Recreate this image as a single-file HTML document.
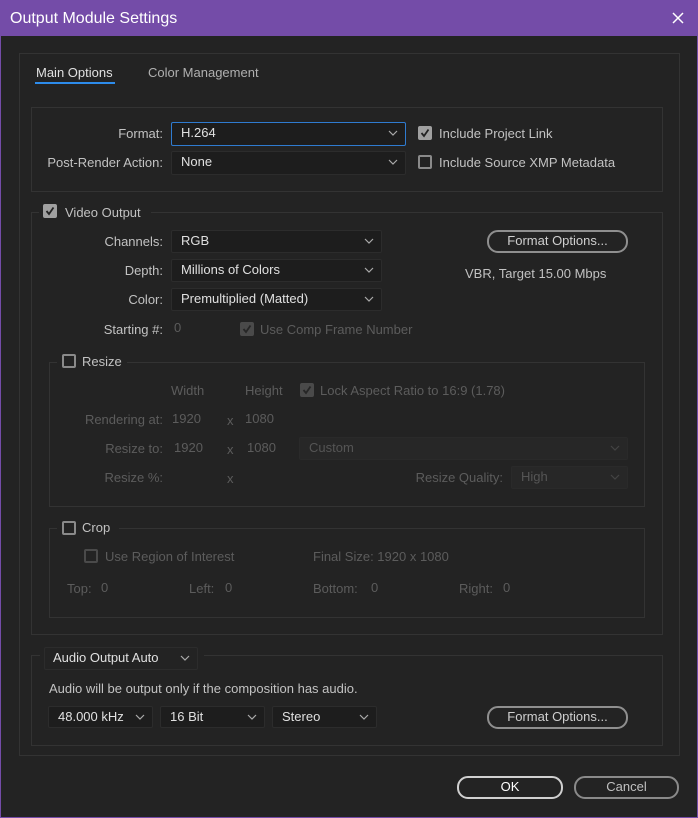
<!DOCTYPE html>
<html><head><meta charset="utf-8"><style>
*{box-sizing:border-box;margin:0;padding:0}
body{width:698px;height:818px;background:#232323;font-family:"Liberation Sans",sans-serif;font-size:13px;color:#c2c2c2;position:relative;overflow:hidden;letter-spacing:0}
.a{position:absolute;white-space:nowrap;line-height:15px}
.r{text-align:right}
.box{position:absolute;border:1px solid #333}
.dd{position:absolute;background:#1d1d1d;border:1px solid #2c2c2c;color:#e0e0e0;padding-left:9px;line-height:20px;border-radius:2px;white-space:nowrap}
.dd svg{position:absolute;right:7px;top:7px}
.dis{color:#5c5c5c}
.dd.dis{background:#272727;border-color:#2a2a2a;color:#555}
.cb{position:absolute;width:14px;height:14px;border:2px solid #8a8a8a;border-radius:2px}
.cb.on{background:#a0a0a0;border-color:#a0a0a0}
.cb.off.dis{border-color:#4a4a4a}
.cb.on.dis{background:#4a4a4a;border-color:#4a4a4a}
.btn{position:absolute;border:2px solid #8f8f8f;border-radius:11px;text-align:center;color:#cfcfcf;line-height:18px}
.lg{background:#232323;padding:0 4px}
</style></head><body>
<div style="position:absolute;left:0;top:0;width:698px;height:818px;border:1px solid #744ca8"></div>
<div style="position:absolute;left:0;top:0;width:698px;height:36px;background:#744ca8"></div>
<div class="a" style="left:10px;top:10px;font-size:16px;line-height:18px;color:#fff">Output Module Settings</div>
<svg style="position:absolute;left:672px;top:12px" width="12" height="12"><path d="M1 1L11 11M11 1L1 11" stroke="#fff" stroke-width="1.5"/></svg>

<div class="box" style="left:19px;top:53px;width:661px;height:703px"></div>
<div class="a" style="left:36px;top:65px;color:#e0e0e0">Main Options</div>
<div style="position:absolute;left:35px;top:82px;width:80px;height:2px;background:#2d8ceb"></div>
<div class="a" style="left:148px;top:65px;color:#b0b0b0">Color Management</div>

<div class="box" style="left:31px;top:107px;width:632px;height:85px"></div>
<div class="a r" style="left:30px;width:133px;top:126px">Format:</div>
<div class="dd" style="left:171px;top:122px;width:235px;height:24px;border-color:#2f7bd0">H.264<svg width="10" height="6"><path d="M1 1L5 5L9 1" stroke="#aaa" fill="none" stroke-width="1.2"/></svg></div>
<div class="a r" style="left:30px;width:133px;top:155px">Post-Render Action:</div>
<div class="dd" style="left:171px;top:151px;width:235px;height:24px">None<svg width="10" height="6"><path d="M1 1L5 5L9 1" stroke="#aaa" fill="none" stroke-width="1.2"/></svg></div>
<div class="cb on" style="left:418px;top:126px"><svg width="10" height="10" style="position:absolute;left:0;top:0"><path d="M1.5 5L4 8L8.5 1.5" stroke="#222" fill="none" stroke-width="1.8"/></svg></div>
<div class="a" style="left:439px;top:126px">Include Project Link</div>
<div class="cb off" style="left:418px;top:155px"></div>
<div class="a" style="left:439px;top:155px">Include Source XMP Metadata</div>

<div class="box" style="left:31px;top:212px;width:632px;height:423px"></div>
<div class="a lg" style="left:39px;top:204px;height:16px;width:112px"></div>
<div class="cb on" style="left:43px;top:204px"><svg width="10" height="10" style="position:absolute;left:0;top:0"><path d="M1.5 5L4 8L8.5 1.5" stroke="#222" fill="none" stroke-width="1.8"/></svg></div>
<div class="a" style="left:65px;top:205px">Video Output</div>

<div class="a r" style="left:30px;width:133px;top:234px">Channels:</div>
<div class="dd" style="left:171px;top:230px;width:211px;height:23px">RGB<svg width="10" height="6"><path d="M1 1L5 5L9 1" stroke="#aaa" fill="none" stroke-width="1.2"/></svg></div>
<div class="a r" style="left:30px;width:133px;top:263px">Depth:</div>
<div class="dd" style="left:171px;top:259px;width:211px;height:23px">Millions of Colors<svg width="10" height="6"><path d="M1 1L5 5L9 1" stroke="#aaa" fill="none" stroke-width="1.2"/></svg></div>
<div class="a r" style="left:30px;width:133px;top:292px">Color:</div>
<div class="dd" style="left:171px;top:288px;width:211px;height:23px">Premultiplied (Matted)<svg width="10" height="6"><path d="M1 1L5 5L9 1" stroke="#aaa" fill="none" stroke-width="1.2"/></svg></div>
<div class="a r" style="left:30px;width:133px;top:322px">Starting #:</div>
<div class="a dis" style="left:174px;top:320px">0</div>
<div class="cb on dis" style="left:240px;top:322px"><svg width="10" height="10" style="position:absolute;left:0;top:0"><path d="M1.5 5L4 8L8.5 1.5" stroke="#262626" fill="none" stroke-width="1.8"/></svg></div>
<div class="a dis" style="left:260px;top:322px">Use Comp Frame Number</div>
<div class="btn" style="left:487px;top:230px;width:141px;height:23px">Format Options...</div>
<div class="a" style="left:465px;top:266px">VBR, Target 15.00 Mbps</div>

<div class="box" style="left:49px;top:362px;width:596px;height:145px"></div>
<div class="a lg" style="left:57px;top:354px;height:16px;width:70px"></div>
<div class="cb off" style="left:62px;top:354px"></div>
<div class="a" style="left:82px;top:354px">Resize</div>
<div class="a dis" style="left:171px;top:383px">Width</div>
<div class="a dis" style="left:245px;top:383px">Height</div>
<div class="cb on dis" style="left:300px;top:383px"><svg width="10" height="10" style="position:absolute;left:0;top:0"><path d="M1.5 5L4 8L8.5 1.5" stroke="#262626" fill="none" stroke-width="1.8"/></svg></div>
<div class="a dis" style="left:320px;top:383px">Lock Aspect Ratio to 16:9 (1.78)</div>
<div class="a dis r" style="left:30px;width:133px;top:412px">Rendering at:</div>
<div class="a dis" style="left:172px;top:411px">1920</div>
<div class="a dis" style="left:227px;top:413px">x</div>
<div class="a dis" style="left:245px;top:411px">1080</div>
<div class="a dis r" style="left:30px;width:133px;top:441px">Resize to:</div>
<div class="a dis" style="left:174px;top:440px">1920</div>
<div class="a dis" style="left:227px;top:442px">x</div>
<div class="a dis" style="left:247px;top:440px">1080</div>
<div class="dd dis" style="left:299px;top:437px;width:329px;height:23px">Custom<svg width="10" height="6"><path d="M1 1L5 5L9 1" stroke="#444" fill="none" stroke-width="1.2"/></svg></div>
<div class="a dis r" style="left:30px;width:133px;top:470px">Resize %:</div>
<div class="a dis" style="left:227px;top:471px">x</div>
<div class="a dis r" style="left:370px;width:133px;top:470px">Resize Quality:</div>
<div class="dd dis" style="left:511px;top:466px;width:117px;height:23px">High<svg width="10" height="6"><path d="M1 1L5 5L9 1" stroke="#444" fill="none" stroke-width="1.2"/></svg></div>

<div class="box" style="left:49px;top:528px;width:596px;height:90px"></div>
<div class="a lg" style="left:57px;top:520px;height:16px;width:62px"></div>
<div class="cb off" style="left:62px;top:521px"></div>
<div class="a" style="left:82px;top:520px">Crop</div>
<div class="cb off dis" style="left:84px;top:549px"></div>
<div class="a dis" style="left:105px;top:549px">Use Region of Interest</div>
<div class="a dis" style="left:313px;top:549px">Final Size: 1920 x 1080</div>
<div class="a dis" style="left:67px;top:581px">Top:</div><div class="a dis" style="left:101px;top:580px">0</div>
<div class="a dis" style="left:189px;top:581px">Left:</div><div class="a dis" style="left:225px;top:580px">0</div>
<div class="a dis" style="left:313px;top:581px">Bottom:</div><div class="a dis" style="left:371px;top:580px">0</div>
<div class="a dis" style="left:459px;top:581px">Right:</div><div class="a dis" style="left:503px;top:580px">0</div>

<div class="box" style="left:31px;top:655px;width:632px;height:91px"></div>
<div class="a lg" style="left:40px;top:647px;height:22px;width:164px"></div>
<div class="dd" style="left:44px;top:647px;width:154px;height:23px;background:#232323;color:#e0e0e0;padding-left:8px">Audio Output Auto<svg width="10" height="6"><path d="M1 1L5 5L9 1" stroke="#aaa" fill="none" stroke-width="1.2"/></svg></div>
<div class="a" style="left:49px;top:681px">Audio will be output only if the composition has audio.</div>
<div class="dd" style="left:48px;top:706px;width:105px;height:22px">48.000 kHz<svg width="10" height="6"><path d="M1 1L5 5L9 1" stroke="#aaa" fill="none" stroke-width="1.2"/></svg></div>
<div class="dd" style="left:160px;top:706px;width:105px;height:22px">16 Bit<svg width="10" height="6"><path d="M1 1L5 5L9 1" stroke="#aaa" fill="none" stroke-width="1.2"/></svg></div>
<div class="dd" style="left:272px;top:706px;width:105px;height:22px">Stereo<svg width="10" height="6"><path d="M1 1L5 5L9 1" stroke="#aaa" fill="none" stroke-width="1.2"/></svg></div>
<div class="btn" style="left:487px;top:706px;width:141px;height:23px">Format Options...</div>

<div class="btn" style="left:457px;top:776px;width:106px;height:23px;border-color:#d0d0d0;color:#fff">OK</div>
<div class="btn" style="left:574px;top:776px;width:105px;height:23px;border-color:#8a8a8a;color:#c0c0c0">Cancel</div>
</body></html>
